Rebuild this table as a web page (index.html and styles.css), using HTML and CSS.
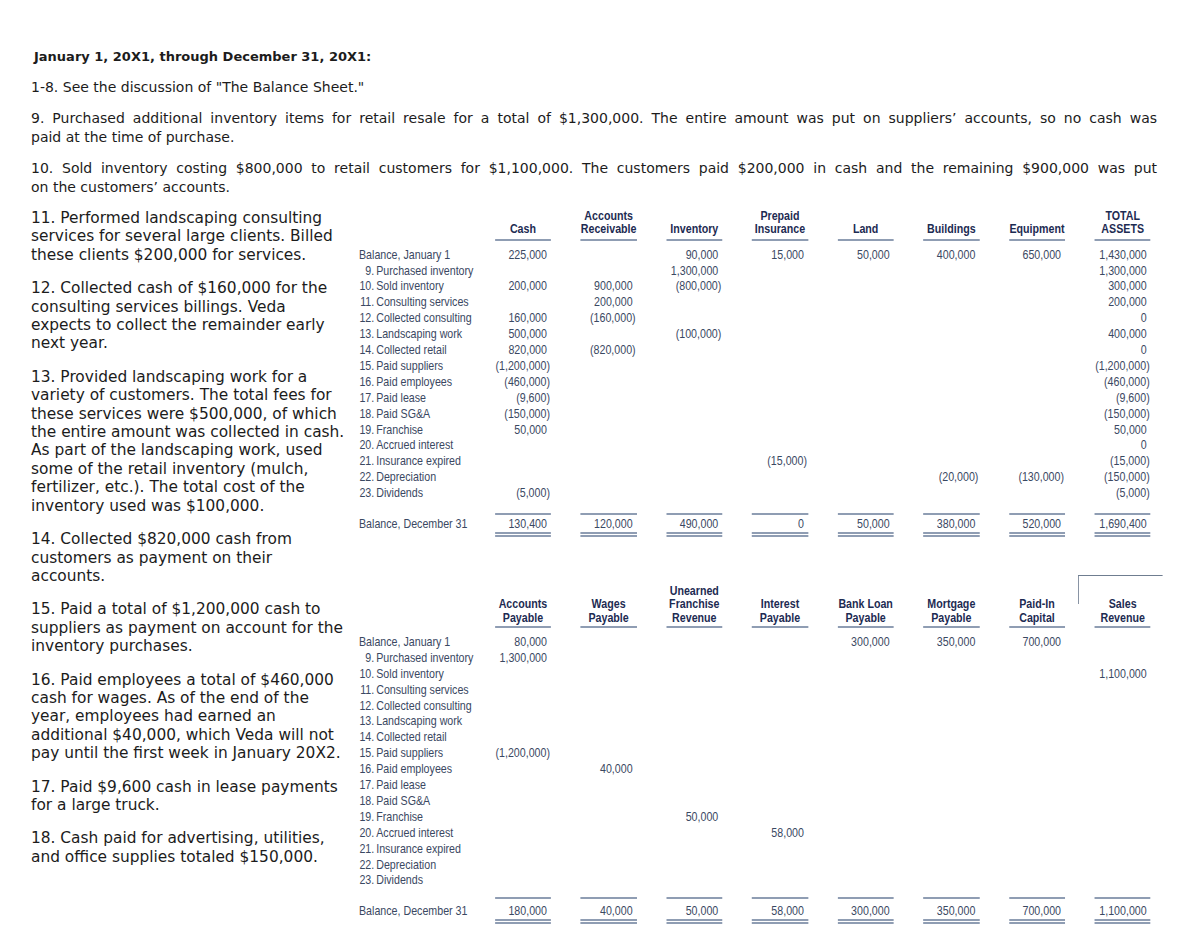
FILE: index.html
```html
<!DOCTYPE html>
<html lang="en">
<head>
<meta charset="utf-8">
<title>Veda transactions 20X1</title>
<link rel="stylesheet" href="styles.css">
</head>
<body>
<div class="page">
  <h1 class="title">January 1, 20X1, through December 31, 20X1:</h1>
  <p class="lead">1-8. See the discussion of "The Balance Sheet."</p>
  <p class="lead"><span class="jline">9. Purchased additional inventory items for retail resale for a total of $1,300,000. The entire amount was put on suppliers’ accounts, so no cash was</span>paid at the time of purchase.</p>
  <p class="lead"><span class="jline">10. Sold inventory costing $800,000 to retail customers for $1,100,000. The customers paid $200,000 in cash and the remaining $900,000 was put</span>on the customers’ accounts.</p>

  <div class="main">
    <div class="notes">
      <p>11. Performed landscaping consulting<br>services for several large clients. Billed<br>these clients $200,000 for services.</p>
      <p>12. Collected cash of $160,000 for the<br>consulting services billings. Veda<br>expects to collect the remainder early<br>next year.</p>
      <p>13. Provided landscaping work for a<br>variety of customers. The total fees for<br>these services were $500,000, of which<br>the entire amount was collected in cash.<br>As part of the landscaping work, used<br>some of the retail inventory (mulch,<br>fertilizer, etc.). The total cost of the<br>inventory used was $100,000.</p>
      <p>14. Collected $820,000 cash from<br>customers as payment on their<br>accounts.</p>
      <p>15. Paid a total of $1,200,000 cash to<br>suppliers as payment on account for the<br>inventory purchases.</p>
      <p>16. Paid employees a total of $460,000<br>cash for wages. As of the end of the<br>year, employees had earned an<br>additional $40,000, which Veda will not<br>pay until the first week in January 20X2.</p>
      <p>17. Paid $9,600 cash in lease payments<br>for a large truck.</p>
      <p>18. Cash paid for advertising, utilities,<br>and office supplies totaled $150,000.</p>
    </div>

    <div class="ledgers">
      <div class="ledger ledger--assets">
        <div class="row head">
          <div></div>
          <div class="h">Cash</div>
          <div class="h">Accounts<br>Receivable</div>
          <div class="h">Inventory</div>
          <div class="h">Prepaid<br>Insurance</div>
          <div class="h">Land</div>
          <div class="h">Buildings</div>
          <div class="h">Equipment</div>
          <div class="h">TOTAL<br>ASSETS</div>
        </div>
        <div class="body">
          <div class="row"><div class="lbl">Balance, January 1</div><div class="v">225,000</div><div class="v"></div><div class="v">90,000</div><div class="v">15,000</div><div class="v">50,000</div><div class="v">400,000</div><div class="v">650,000</div><div class="v">1,430,000</div></div>
          <div class="row"><div class="lbl"><span class="no">9.</span>Purchased inventory</div><div class="v"></div><div class="v"></div><div class="v">1,300,000</div><div class="v"></div><div class="v"></div><div class="v"></div><div class="v"></div><div class="v">1,300,000</div></div>
          <div class="row"><div class="lbl"><span class="no">10.</span>Sold inventory</div><div class="v">200,000</div><div class="v">900,000</div><div class="v neg">(800,000)</div><div class="v"></div><div class="v"></div><div class="v"></div><div class="v"></div><div class="v">300,000</div></div>
          <div class="row"><div class="lbl"><span class="no">11.</span>Consulting services</div><div class="v"></div><div class="v">200,000</div><div class="v"></div><div class="v"></div><div class="v"></div><div class="v"></div><div class="v"></div><div class="v">200,000</div></div>
          <div class="row"><div class="lbl"><span class="no">12.</span>Collected consulting</div><div class="v">160,000</div><div class="v neg">(160,000)</div><div class="v"></div><div class="v"></div><div class="v"></div><div class="v"></div><div class="v"></div><div class="v">0</div></div>
          <div class="row"><div class="lbl"><span class="no">13.</span>Landscaping work</div><div class="v">500,000</div><div class="v"></div><div class="v neg">(100,000)</div><div class="v"></div><div class="v"></div><div class="v"></div><div class="v"></div><div class="v">400,000</div></div>
          <div class="row"><div class="lbl"><span class="no">14.</span>Collected retail</div><div class="v">820,000</div><div class="v neg">(820,000)</div><div class="v"></div><div class="v"></div><div class="v"></div><div class="v"></div><div class="v"></div><div class="v">0</div></div>
          <div class="row"><div class="lbl"><span class="no">15.</span>Paid suppliers</div><div class="v neg">(1,200,000)</div><div class="v"></div><div class="v"></div><div class="v"></div><div class="v"></div><div class="v"></div><div class="v"></div><div class="v neg">(1,200,000)</div></div>
          <div class="row"><div class="lbl"><span class="no">16.</span>Paid employees</div><div class="v neg">(460,000)</div><div class="v"></div><div class="v"></div><div class="v"></div><div class="v"></div><div class="v"></div><div class="v"></div><div class="v neg">(460,000)</div></div>
          <div class="row"><div class="lbl"><span class="no">17.</span>Paid lease</div><div class="v neg">(9,600)</div><div class="v"></div><div class="v"></div><div class="v"></div><div class="v"></div><div class="v"></div><div class="v"></div><div class="v neg">(9,600)</div></div>
          <div class="row"><div class="lbl"><span class="no">18.</span>Paid SG&amp;A</div><div class="v neg">(150,000)</div><div class="v"></div><div class="v"></div><div class="v"></div><div class="v"></div><div class="v"></div><div class="v"></div><div class="v neg">(150,000)</div></div>
          <div class="row"><div class="lbl"><span class="no">19.</span>Franchise</div><div class="v">50,000</div><div class="v"></div><div class="v"></div><div class="v"></div><div class="v"></div><div class="v"></div><div class="v"></div><div class="v">50,000</div></div>
          <div class="row"><div class="lbl"><span class="no">20.</span>Accrued interest</div><div class="v"></div><div class="v"></div><div class="v"></div><div class="v"></div><div class="v"></div><div class="v"></div><div class="v"></div><div class="v">0</div></div>
          <div class="row"><div class="lbl"><span class="no">21.</span>Insurance expired</div><div class="v"></div><div class="v"></div><div class="v"></div><div class="v neg">(15,000)</div><div class="v"></div><div class="v"></div><div class="v"></div><div class="v neg">(15,000)</div></div>
          <div class="row"><div class="lbl"><span class="no">22.</span>Depreciation</div><div class="v"></div><div class="v"></div><div class="v"></div><div class="v"></div><div class="v"></div><div class="v neg">(20,000)</div><div class="v neg">(130,000)</div><div class="v neg">(150,000)</div></div>
          <div class="row"><div class="lbl"><span class="no">23.</span>Dividends</div><div class="v neg">(5,000)</div><div class="v"></div><div class="v"></div><div class="v"></div><div class="v"></div><div class="v"></div><div class="v"></div><div class="v neg">(5,000)</div></div>
        </div>
        <div class="row total">
          <div class="lbl">Balance, December 31</div>
          <div class="v t">130,400</div><div class="v t">120,000</div><div class="v t">490,000</div><div class="v t">0</div><div class="v t">50,000</div><div class="v t">380,000</div><div class="v t">520,000</div><div class="v t">1,690,400</div>
        </div>
      </div>

      <div class="ledger ledger--claims">
        <span class="mark" aria-hidden="true"></span>
        <div class="row head">
          <div></div>
          <div class="h">Accounts<br>Payable</div>
          <div class="h">Wages<br>Payable</div>
          <div class="h">Unearned<br>Franchise<br>Revenue</div>
          <div class="h">Interest<br>Payable</div>
          <div class="h">Bank Loan<br>Payable</div>
          <div class="h">Mortgage<br>Payable</div>
          <div class="h">Paid-In<br>Capital</div>
          <div class="h">Sales<br>Revenue</div>
        </div>
        <div class="body">
          <div class="row"><div class="lbl">Balance, January 1</div><div class="v">80,000</div><div class="v"></div><div class="v"></div><div class="v"></div><div class="v">300,000</div><div class="v">350,000</div><div class="v">700,000</div><div class="v"></div></div>
          <div class="row"><div class="lbl"><span class="no">9.</span>Purchased inventory</div><div class="v">1,300,000</div><div class="v"></div><div class="v"></div><div class="v"></div><div class="v"></div><div class="v"></div><div class="v"></div><div class="v"></div></div>
          <div class="row"><div class="lbl"><span class="no">10.</span>Sold inventory</div><div class="v"></div><div class="v"></div><div class="v"></div><div class="v"></div><div class="v"></div><div class="v"></div><div class="v"></div><div class="v">1,100,000</div></div>
          <div class="row"><div class="lbl"><span class="no">11.</span>Consulting services</div></div>
          <div class="row"><div class="lbl"><span class="no">12.</span>Collected consulting</div></div>
          <div class="row"><div class="lbl"><span class="no">13.</span>Landscaping work</div></div>
          <div class="row"><div class="lbl"><span class="no">14.</span>Collected retail</div></div>
          <div class="row"><div class="lbl"><span class="no">15.</span>Paid suppliers</div><div class="v neg">(1,200,000)</div></div>
          <div class="row"><div class="lbl"><span class="no">16.</span>Paid employees</div><div class="v"></div><div class="v">40,000</div></div>
          <div class="row"><div class="lbl"><span class="no">17.</span>Paid lease</div></div>
          <div class="row"><div class="lbl"><span class="no">18.</span>Paid SG&amp;A</div></div>
          <div class="row"><div class="lbl"><span class="no">19.</span>Franchise</div><div class="v"></div><div class="v"></div><div class="v">50,000</div></div>
          <div class="row"><div class="lbl"><span class="no">20.</span>Accrued interest</div><div class="v"></div><div class="v"></div><div class="v"></div><div class="v">58,000</div></div>
          <div class="row"><div class="lbl"><span class="no">21.</span>Insurance expired</div></div>
          <div class="row"><div class="lbl"><span class="no">22.</span>Depreciation</div></div>
          <div class="row"><div class="lbl"><span class="no">23.</span>Dividends</div></div>
        </div>
        <div class="row total">
          <div class="lbl">Balance, December 31</div>
          <div class="v t">180,000</div><div class="v t">40,000</div><div class="v t">50,000</div><div class="v t">58,000</div><div class="v t">300,000</div><div class="v t">350,000</div><div class="v t">700,000</div><div class="v t">1,100,000</div>
        </div>
      </div>
    </div>
  </div>
</div>
</body>
</html>
```

FILE: styles.css
```css
html, body {
  margin: 0;
  padding: 0;
  background: #ffffff;
}

.page {
  width: 1200px;
  height: 927px;
  box-sizing: border-box;
  padding: 47px 0 0 31px;
  color: #1c1c1c;
  font-family: "DejaVu Sans", "Liberation Sans", sans-serif;
  overflow: hidden;
}

.title {
  margin: 0 0 12px;
  padding-left: 3px;
  font-size: 13px;
  line-height: 19px;
  font-weight: 700;
}

.lead {
  width: 1126px;
  margin: 0 0 12px;
  font-size: 14px;
  line-height: 19px;
  white-space: nowrap;
}

.jline {
  display: block;
  white-space: normal;
  text-align: justify;
  text-align-last: justify;
}

.main {
  display: flex;
  align-items: flex-start;
}

.notes {
  flex: none;
  width: 328px;
  font-size: 15.4px;
  line-height: 18.4px;
  white-space: nowrap;
}

.notes p {
  margin: 0 0 15px;
}

/* The ledgers use a narrow grotesque; it is emulated by
   laying the grid out at 1/0.82 width and compressing it. */
.ledgers {
  flex: none;
  font-family: "Liberation Sans", Arial, sans-serif;
  font-size: 13px;
  color: #3a4862;
  transform: scaleX(0.82);
  transform-origin: 0 0;
}

.ledger {
  position: relative;
}

.ledger--claims {
  margin-top: 47px;
}

.row {
  display: grid;
  grid-template-columns: 129.6px repeat(8, 68.3px);
  column-gap: 36.2px;
  line-height: 15.9px;
  white-space: nowrap;
}

.head {
  align-items: end;
}

.h {
  display: flex;
  flex-direction: column;
  align-items: center;
  text-align: center;
  font-weight: 700;
  color: #1d2b52;
  line-height: 13.3px;
  padding-bottom: 2px;
  border-bottom: 2px solid #8f9db3;
}

.ledger--assets .h {
  padding-bottom: 3px;
}

.body {
  margin-top: 6px;
}

.no {
  display: inline-block;
  width: 21px;
  padding-right: 2.4px;
  box-sizing: border-box;
  text-align: right;
}

.v {
  text-align: right;
  padding-right: 4.9px;
}

.v.neg {
  padding-right: 1.2px;
}

.ledger--assets .total {
  margin-top: 12px;
}

.ledger--claims .total {
  margin-top: 9px;
}

.total .lbl,
.v.t {
  border-top: 2px solid transparent;
  padding-top: 1px;
}

.v.t {
  border-top-color: #8f9db3;
  border-bottom: 5px double #8f9db3;
}

.ledger--claims .total .lbl,
.ledger--claims .v.t {
  padding-top: 4px;
}

.mark {
  position: absolute;
  left: 877px;
  top: -9px;
  width: 102.4px;
  height: 28px;
  border-top: 1.5px solid #6f7d90;
  border-left: 1.5px solid #6f7d90;
}
```
